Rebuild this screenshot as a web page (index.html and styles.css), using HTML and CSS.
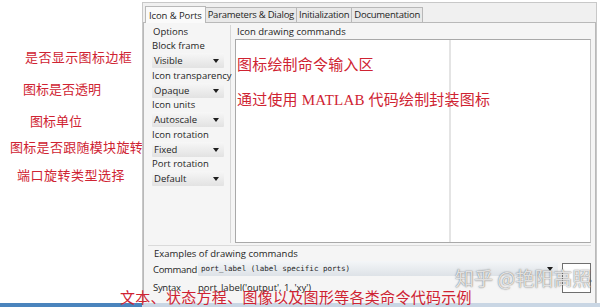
FILE: index.html
```html
<!DOCTYPE html>
<html lang="zh-CN">
<head>
    <meta charset="UTF-8">
    <title>Mask Editor - Icon &amp; Ports</title>
    <link rel="stylesheet" href="styles.css">
</head>
<body>
    <div class="screen">
        <div class="main">
            <ul class="notes">
                <li class="note n1">是否显示图标边框</li>
                <li class="note n2">图标是否透明</li>
                <li class="note n3">图标单位</li>
                <li class="note n4">图标是否跟随模块旋转</li>
                <li class="note n5">端口旋转类型选择</li>
            </ul>

            <div class="dialog">
                <div class="tabs">
                    <span class="tab active">Icon &amp; Ports</span>
                    <span class="tab">Parameters &amp; Dialog</span>
                    <span class="tab">Initialization</span>
                    <span class="tab">Documentation</span>
                </div>

                <div class="panel">
                    <div class="top">
                        <div class="options">
                            <div class="opt-title">Options</div>
                            <div class="field-label">Block frame</div>
                            <div class="select">Visible</div>
                            <div class="field-label">Icon transparency</div>
                            <div class="select">Opaque</div>
                            <div class="field-label">Icon units</div>
                            <div class="select">Autoscale</div>
                            <div class="field-label">Icon rotation</div>
                            <div class="select">Fixed</div>
                            <div class="field-label">Port rotation</div>
                            <div class="select">Default</div>
                        </div>

                        <div class="commands">
                            <div class="cmd-label">Icon drawing commands</div>
                            <div class="cmd-area">
                                <div class="cmd-text">
                                    <p class="red">图标绘制命令输入区</p>
                                    <p class="red">通过使用 MATLAB 代码绘制封装图标</p>
                                </div>
                                <div class="cmd-side"></div>
                            </div>
                        </div>
                    </div>

                    <div class="examples">
                        <div class="ex-title">Examples of drawing commands</div>
                        <div class="ex-body">
                            <div class="ex-rows">
                                <div class="ex-row">
                                    <span class="ex-key">Command</span>
                                    <div class="select wide mono">port_label (label specific ports)</div>
                                </div>
                                <div class="ex-row syntax">
                                    <span class="ex-key">Syntax</span>
                                    <span>port_label('output', 1, 'xy')</span>
                                </div>
                            </div>
                            <div class="preview"><span class="arrows">&raquo;</span></div>
                        </div>
                    </div>
                </div>
            </div>
        </div>
        <div class="strip"></div>

        <div class="caption red">文本、状态方程、图像以及图形等各类命令代码示例</div>
        <div class="watermark">知乎 @艳阳高照</div>
    </div>
</body>
</html>
```

FILE: styles.css
```css
* {
    box-sizing: border-box;
    margin: 0;
    padding: 0;
}

body {
    font-family: "Open Sans", "Noto Sans", sans-serif;
    font-size: 9.5px;
    color: #1e1e1e;
    background-color: #ffffff;
    overflow: hidden;
}

.screen {
    position: relative;
    width: 600px;
    height: 307px;
    display: flex;
    flex-direction: column;
}

.main {
    flex: 1;
    display: flex;
    min-height: 0;
}

.red {
    font-family: "Liberation Serif", "Noto Sans CJK SC", serif;
    color: #cf2332;
}

/* left annotations */
.notes {
    list-style: none;
    width: 142px;
    flex-shrink: 0;
    padding-top: 50px;
}

.note {
    font-family: "Liberation Serif", "Noto Sans CJK SC", serif;
    color: #cf2332;
    font-size: 13px;
    line-height: 16px;
    white-space: nowrap;
}

.n1 { margin-left: 25px; letter-spacing: 0.4px; }
.n2 { margin-left: 23px; margin-top: 16px; }
.n3 { margin-left: 30px; margin-top: 16px; }
.n4 { margin-left: 10px; margin-top: 10px; letter-spacing: 0.3px; }
.n5 { margin-left: 17px; margin-top: 12px; letter-spacing: 0.5px; }

/* dialog */
.dialog {
    width: 455px;
    margin-top: 2px;
    background-color: #f0f0f0;
    border: 1px solid #c8c8c8;
    border-bottom: none;
    display: flex;
    flex-direction: column;
    padding-top: 2px;
}

.tabs {
    display: flex;
    height: 17px;
    padding-left: 2px;
    align-items: flex-end;
}

.tab {
    height: 15px;
    line-height: 14px;
    padding: 0 2px;
    letter-spacing: -0.25px;
    background-color: #e9e9e9;
    border: 1px solid #b8b8b8;
    border-bottom: none;
    margin-right: -1px;
    white-space: nowrap;
}

.tab.active {
    height: 17px;
    line-height: 17px;
    background-color: #fafafa;
    position: relative;
    z-index: 1;
    margin-bottom: -1px;
    padding: 0 3px;
    letter-spacing: -0.1px;
}

.panel {
    flex: 1;
    border: 1px solid #b9b9b9;
    border-bottom: none;
    background-color: #f5f5f5;
    display: flex;
    flex-direction: column;
    padding: 2px 4px 0 4px;
}

.top {
    display: flex;
    height: 218px;
}

.options {
    width: 83px;
    border-right: 1px solid #d6d6d6;
    padding-left: 4px;
}

.opt-title {
    line-height: 14px;
    padding-left: 1px;
}

.field-label {
    line-height: 14px;
    white-space: nowrap;
}

.select {
    position: relative;
    width: 72px;
    height: 15px;
    line-height: 15px;
    padding-left: 2px;
    margin-bottom: 0.5px;
    background: linear-gradient(#f7f7f7, #e2e2e2);
    border-radius: 1px;
}

.select::after {
    content: "";
    position: absolute;
    right: 5px;
    top: 6px;
    border-left: 3px solid transparent;
    border-right: 3px solid transparent;
    border-top: 4px solid #1e1e1e;
}

.commands {
    flex: 1;
    display: flex;
    flex-direction: column;
    padding-left: 4px;
}

.cmd-label {
    line-height: 14px;
    padding-left: 2px;
}

.cmd-area {
    flex: 1;
    display: flex;
    background-color: #ffffff;
    border: 1px solid #a9a9a9;
    border-right-color: #c6c6c6;
}

.cmd-text {
    width: 215px;
    border-right: 2px solid #e4e4e4;
    padding: 16px 0 0 1px;
    white-space: nowrap;
}

.cmd-text p {
    font-size: 15px;
    line-height: 18px;
    letter-spacing: 0.2px;
}

.cmd-text p + p {
    margin-top: 17px;
}

.cmd-side {
    flex: 1;
}

.examples {
    flex: 1;
    padding: 1px 0 0 5px;
    border-top: 1px solid #dadada;
    margin-top: 2px;
}

.ex-title {
    line-height: 14px;
    padding-left: 1px;
}

.ex-body {
    display: flex;
    align-items: flex-start;
}

.ex-rows {
    flex: 1;
}

.ex-row {
    display: flex;
    align-items: center;
    height: 16px;
}

.ex-row.syntax {
    margin-top: 2px;
}

.ex-key {
    width: 45px;
    flex-shrink: 0;
    letter-spacing: -0.3px;
}

.select.wide {
    width: 360px;
    background: linear-gradient(#f4f6f8, #dde2e7);
    padding-left: 3px;
}

.mono {
    font-family: "DejaVu Sans Mono", monospace;
    font-size: 7.5px;
}

.preview {
    width: 30px;
    height: 30px;
    margin: 2px 0 0 4px;
    background-color: #ffffff;
    border: 1px solid #6f6f6f;
    position: relative;
}

.arrows {
    position: absolute;
    right: -2px;
    top: 12px;
    font-size: 7px;
    color: #555555;
}

.strip {
    height: 4px;
    background: linear-gradient(to right, #4a84bd 0, #4a84bd 142px, #c9d6e4 142px);
}

.caption {
    position: absolute;
    left: 120px;
    top: 289px;
    font-size: 15px;
    line-height: 18px;
    letter-spacing: 0.3px;
    white-space: nowrap;
}

.watermark {
    position: absolute;
    left: 455px;
    top: 266px;
    font-family: "Noto Sans CJK SC", sans-serif;
    font-size: 19px;
    line-height: 24px;
    color: rgba(255, 255, 255, 0.8);
    text-shadow: 0 0 1px rgba(80, 80, 80, 0.8), 0 0 2px rgba(120, 120, 120, 0.5);
    white-space: nowrap;
}
```
